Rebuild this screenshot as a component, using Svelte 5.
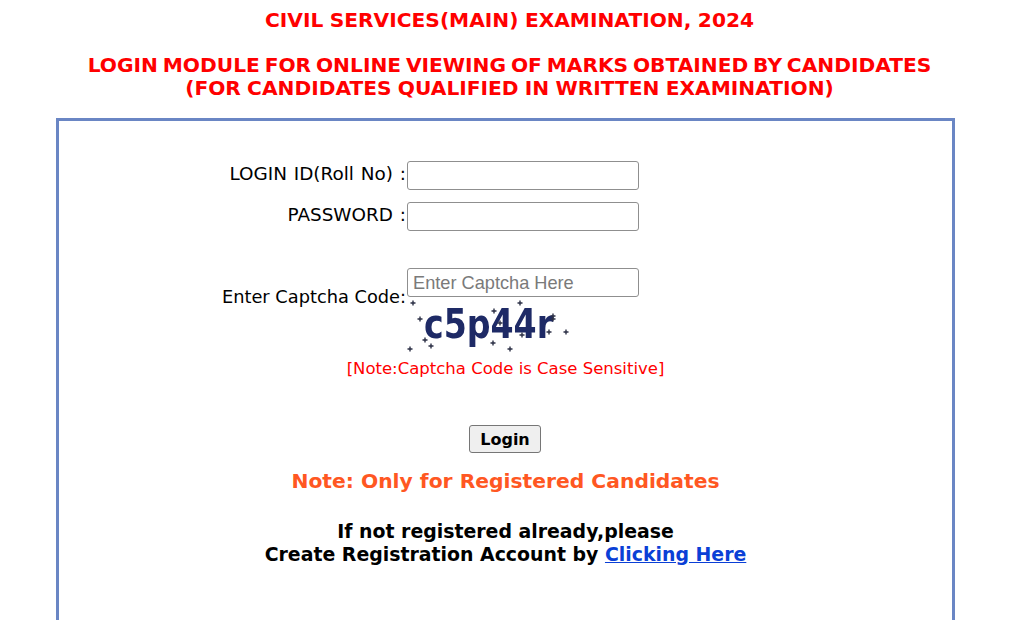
<script>
  const stars = [[6,5],[113,5],[87,13],[13,21],[146,18],[146,21],[93,25],[142,34],[159,34],[18,42],[24,48],[86,45],[115,37],[3,51],[103,51]];
</script>

<div class="page">
  <h1 class="title">CIVIL SERVICES(MAIN) EXAMINATION, 2024</h1>
  <h1 class="module"><span class="l1">LOGIN MODULE FOR ONLINE VIEWING OF MARKS OBTAINED BY CANDIDATES</span><br /><span class="l2">(FOR CANDIDATES QUALIFIED IN WRITTEN EXAMINATION)</span></h1>

  <main class="box">
    <form class="form">
      <label for="id" class="spaced">LOGIN ID(Roll No)&nbsp;:</label>
      <input id="id" type="text" />
      <label for="pw" class="spaced">PASSWORD&nbsp;:</label>
      <input id="pw" type="password" />
      <label for="cap" class="caplabel">Enter Captcha Code:</label>
      <div class="capcell">
        <input id="cap" type="text" placeholder="Enter Captcha Here" />
        <svg class="captcha" width="170" height="60" viewBox="0 0 170 60">
          <text x="17" y="40" class="captext" textLength="129" lengthAdjust="spacingAndGlyphs">c5p44r</text>
          {#each stars as s}
            <path d="M{s[0]-2.5} {s[1]}H{s[0]+2.5}M{s[0]} {s[1]-2.5}V{s[1]+2.5}" stroke="#2b2f45" stroke-width="1.4" />
          {/each}
        </svg>
      </div>
    </form>
    <p class="casenote">[Note:Captcha Code is Case Sensitive]</p>
    <div class="action"><button type="button">Login</button></div>
    <p class="regnote">Note: Only for Registered Candidates</p>
    <p class="create">If not registered already,please<br />Create Registration Account by <a href="#top">Clicking Here</a></p>
  </main>
</div>

<style>
  :global(body) { margin: 0; background: #fff; overflow: hidden; }
  .page { width: 1019px; height: 620px; overflow: hidden; font-family: "DejaVu Sans", Verdana, sans-serif; }
  h1 { margin: 0; text-align: center; color: #ff0000; font-weight: bold; font-size: 20.2px; line-height: 23px; }
  .title { padding-top: 9px; word-spacing: -0.6px; }
  .module { margin-top: 22px; }
  .l1 { word-spacing: -2.2px; }
  .l2 { word-spacing: -0.8px; }
  .box { margin: 18px 0 0 56px; width: 899px; height: 600px; box-sizing: border-box; border: 3px solid #6a86c4; padding-top: 40px; }
  .form { display: grid; grid-template-columns: 348px 232px; row-gap: 12px; align-items: center; }
  label { text-align: right; font-size: 17.8px; color: #000; padding-right: 1px; }
  .spaced { font-size: 18.4px; word-spacing: 1px; padding-bottom: 4px; }
  input { width: 232px; height: 29px; box-sizing: border-box; border: 1px solid #8f8f8f; border-radius: 3px; padding: 2px 5px 0; margin: 0; font-family: "Liberation Sans", Arial, sans-serif; font-size: 18.2px; background: #fff; }
  input::placeholder { color: #7a7a7a; opacity: 1; }
  .caplabel { align-self: start; margin-top: 43px; }
  .capcell { margin-top: 25px; height: 92px; }
  .captcha { display: block; margin-top: 1px; }
  .captext { font-family: "DejaVu Sans", sans-serif; font-stretch: condensed; font-weight: bold; font-size: 41px; fill: #1e2a66; filter: blur(0.4px); }
  .casenote { margin: 0; text-align: center; color: #ff0000; font-size: 16.5px; line-height: 18px; }
  .action { text-align: center; margin-top: 47px; padding-right: 1px; }
  button { width: 72px; height: 28px; padding: 0; font-family: "DejaVu Sans", Verdana, sans-serif; font-weight: bold; font-size: 16px; color: #000; background: #efefef; border: 1px solid #767676; border-radius: 3px; }
  .regnote { margin: 15px 0 0; text-align: center; color: #ff5722; font-size: 20.3px; font-weight: bold; line-height: 26px; }
  .create { margin: 26px 0 0; text-align: center; color: #000; font-weight: bold; font-size: 18.9px; line-height: 23px; }
  a { color: #0a3fd6; }
</style>
